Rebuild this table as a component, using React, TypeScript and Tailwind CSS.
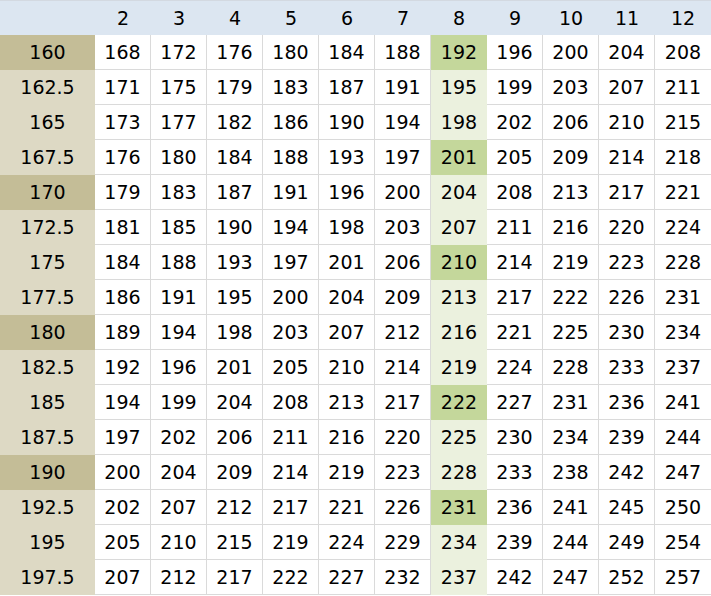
const multipliers = ["2", "3", "4", "5", "6", "7", "8", "9", "10", "11", "12"];

const rows: { height: string; values: number[] }[] = [
  { height: "160", values: [168, 172, 176, 180, 184, 188, 192, 196, 200, 204, 208] },
  { height: "162.5", values: [171, 175, 179, 183, 187, 191, 195, 199, 203, 207, 211] },
  { height: "165", values: [173, 177, 182, 186, 190, 194, 198, 202, 206, 210, 215] },
  { height: "167.5", values: [176, 180, 184, 188, 193, 197, 201, 205, 209, 214, 218] },
  { height: "170", values: [179, 183, 187, 191, 196, 200, 204, 208, 213, 217, 221] },
  { height: "172.5", values: [181, 185, 190, 194, 198, 203, 207, 211, 216, 220, 224] },
  { height: "175", values: [184, 188, 193, 197, 201, 206, 210, 214, 219, 223, 228] },
  { height: "177.5", values: [186, 191, 195, 200, 204, 209, 213, 217, 222, 226, 231] },
  { height: "180", values: [189, 194, 198, 203, 207, 212, 216, 221, 225, 230, 234] },
  { height: "182.5", values: [192, 196, 201, 205, 210, 214, 219, 224, 228, 233, 237] },
  { height: "185", values: [194, 199, 204, 208, 213, 217, 222, 227, 231, 236, 241] },
  { height: "187.5", values: [197, 202, 206, 211, 216, 220, 225, 230, 234, 239, 244] },
  { height: "190", values: [200, 204, 209, 214, 219, 223, 228, 233, 238, 242, 247] },
  { height: "192.5", values: [202, 207, 212, 217, 221, 226, 231, 236, 241, 245, 250] },
  { height: "195", values: [205, 210, 215, 219, 224, 229, 234, 239, 244, 249, 254] },
  { height: "197.5", values: [207, 212, 217, 222, 227, 232, 237, 242, 247, 252, 257] },
];

// rows where the "8" column is picked out in the darker green
const strongRows = [0, 3, 6, 10, 13];
const HIGHLIGHT_COL = 6;

function cellClass(rowIdx: number, colIdx: number) {
  if (colIdx === HIGHLIGHT_COL) {
    return strongRows.includes(rowIdx) ? "bg-[#c4d79b]" : "bg-[#ebf1de]";
  }
  if (colIdx === multipliers.length - 1) {
    return "bg-white border-b border-[#dadada]";
  }
  return "bg-white border-r border-b border-[#dadada]";
}

export default function App() {
  return (
    <div
      className="w-[711px] h-[596px] bg-white text-black text-[19px] leading-none overflow-hidden"
      style={{ fontFamily: '"DejaVu Sans", Verdana, sans-serif' }}
    >
      <div className="grid grid-cols-[95px_repeat(11,56px)]">
        {/* header */}
        <div className="h-[35px] bg-[#dce6f1] border-t border-[#d3d9e1]" />
        {multipliers.map((m) => (
          <div
            key={m}
            className="h-[35px] bg-[#dce6f1] border-t border-[#d3d9e1] flex items-center justify-center"
          >
            {m}
          </div>
        ))}

        {rows.map((row, r) => (
          <div key={row.height} className="contents">
            <div
              className={
                r % 4 === 0
                  ? "h-[35px] bg-[#c4bd97] flex items-center justify-center"
                  : "h-[35px] bg-[#ddd9c4] flex items-center justify-center"
              }
            >
              {row.height}
            </div>
            {row.values.map((v, c) => (
              <div
                key={c}
                className={"h-[35px] flex items-center justify-center " + cellClass(r, c)}
              >
                {v}
              </div>
            ))}
          </div>
        ))}
      </div>
    </div>
  );
}
